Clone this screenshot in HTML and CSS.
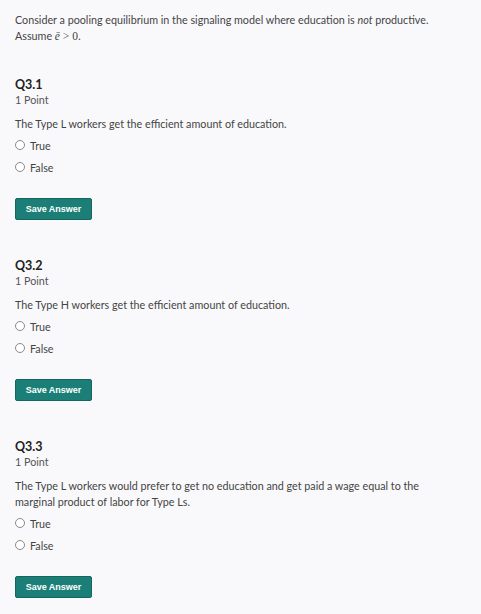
FILE: index.html
```html
<!DOCTYPE html>
<html>
<head>
<meta charset="utf-8">
<link rel="stylesheet" href="styles.css">
</head>
<body>
<main class="page">
  <div class="intro">
    <p>Consider a pooling equilibrium in the signaling model where education is <em>not</em> productive.</p>
    <p>Assume <span class="math"><span class="ebar">ē</span> &gt; 0.</span></p>
  </div>

  <section class="question">
    <h2 class="q-title">Q3.1</h2>
    <div class="q-points">1 Point</div>
    <p class="q-text">The Type L workers get the efficient amount of education.</p>
    <div class="options">
      <label class="option"><span class="radio"></span>True</label>
      <label class="option"><span class="radio"></span>False</label>
    </div>
    <button class="save">Save Answer</button>
  </section>

  <section class="question">
    <h2 class="q-title">Q3.2</h2>
    <div class="q-points">1 Point</div>
    <p class="q-text">The Type H workers get the efficient amount of education.</p>
    <div class="options">
      <label class="option"><span class="radio"></span>True</label>
      <label class="option"><span class="radio"></span>False</label>
    </div>
    <button class="save">Save Answer</button>
  </section>

  <section class="question">
    <h2 class="q-title">Q3.3</h2>
    <div class="q-points">1 Point</div>
    <p class="q-text">The Type L workers would prefer to get no education and get paid a wage equal to the marginal product of labor for Type Ls.</p>
    <div class="options">
      <label class="option"><span class="radio"></span>True</label>
      <label class="option"><span class="radio"></span>False</label>
    </div>
    <button class="save">Save Answer</button>
  </section>
</main>
</body>
</html>
```

FILE: styles.css
```css
html, body {
  margin: 0;
  padding: 0;
  background: #f9f9fb;
}
body {
  font-family: Lato, "Liberation Sans", sans-serif;
  font-size: 10.75px;
  color: #444;
}
.page {
  padding: 12px 15px 0 15px;
  width: 432px;
}
.intro p {
  margin: 0;
  line-height: 16px;
}
.intro em {
  font-style: italic;
}
.math {
  font-family: "Liberation Serif", serif;
  font-size: 11.5px;
}
.ebar {
  font-style: italic;
}
.question {
  display: flex;
  flex-direction: column;
  align-items: flex-start;
  margin-top: 33px;
}
.question + .question {
  margin-top: 38px;
}
.q-title {
  margin: 0;
  font-size: 12.5px;
  font-weight: 700;
  line-height: 16px;
  color: #222;
}
.q-points {
  line-height: 14px;
  color: #555;
}
.q-text {
  margin: 9px 0 2px 0;
  line-height: 16px;
}
.options {
  display: flex;
  flex-direction: column;
}
.option {
  display: flex;
  align-items: center;
  gap: 5px;
  height: 22px;
}
.radio {
  width: 8px;
  height: 8px;
  border: 1.5px solid #8a8a8a;
  border-radius: 50%;
  background: #fff;
}
.save {
  margin-top: 20px;
  height: 22px;
  width: 77px;
  padding: 0;
  background: #1c7f77;
  border: 1px solid #14665f;
  border-radius: 2px;
  color: #fff;
  font-family: "Liberation Sans", sans-serif;
  font-weight: 700;
  font-size: 9px;
}
```
